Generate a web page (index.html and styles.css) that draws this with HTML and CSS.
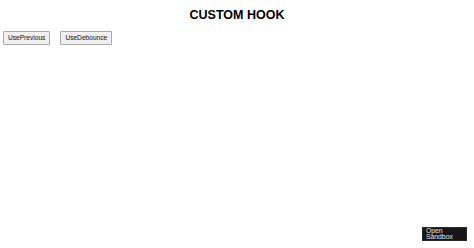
FILE: index.html
```html
<!DOCTYPE html>
<html lang="en">
<head>
<meta charset="utf-8">
<title>Custom Hook</title>
<link rel="stylesheet" href="styles.css">
</head>
<body>
<div class="app">
  <h1 class="title">CUSTOM HOOK</h1>
  <div class="actions">
    <button class="btn" type="button">UsePrevious</button>
    <button class="btn" type="button">UseDebounce</button>
  </div>
</div>
<a class="sandbox" href="#">Open Sandbox</a>
</body>
</html>
```
FILE: styles.css
```css
html, body {
  margin: 0;
  padding: 0;
  background: #ffffff;
}
body {
  font-family: "Liberation Sans", Arial, sans-serif;
  color: #000;
}
.app {
  display: flex;
  flex-direction: column;
  padding: 8px 0 0 3px;
}
.title {
  margin: 0;
  font-size: 12.5px;
  line-height: 15px;
  font-weight: 700;
  text-align: center;
  padding-right: 3px;
}
.actions {
  display: flex;
  gap: 10px;
  margin-top: 8px;
}
.btn {
  box-sizing: border-box;
  height: 14px;
  padding: 0 4px;
  border: 1px solid #a9a9a9;
  border-radius: 1px;
  background: #efefef;
  font-family: "Liberation Sans", Arial, sans-serif;
  font-size: 6.6px;
  line-height: 12px;
  color: #111;
}
.sandbox {
  position: fixed;
  right: 7px;
  bottom: 7px;
  box-sizing: border-box;
  width: 45px;
  height: 14px;
  padding: 0 3px;
  background: #161616;
  border: 1px solid #2a2a2a;
  color: #e6e6e6;
  font-size: 6.8px;
  line-height: 6.3px;
  text-decoration: none;
  word-spacing: 20px;
}
```
